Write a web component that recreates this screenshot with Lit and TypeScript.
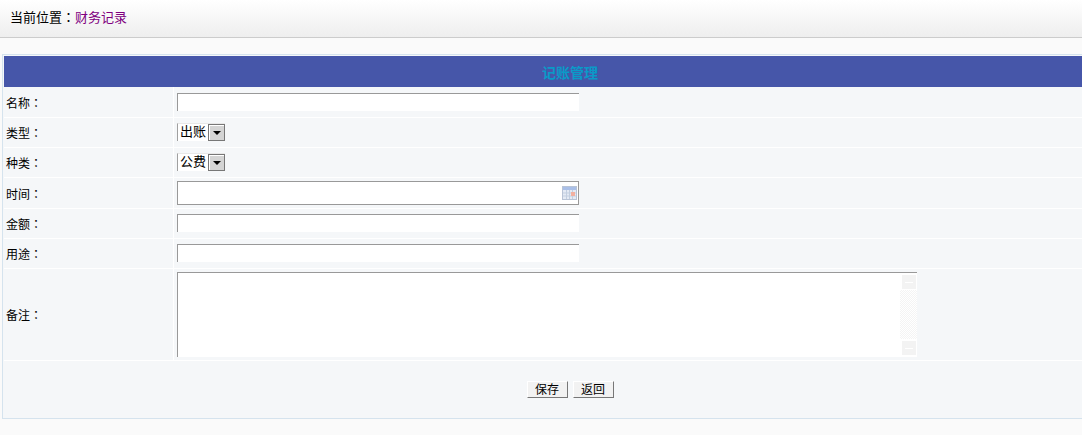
import { LitElement, html, css } from "lit";
import { customElement } from "lit/decorators.js";

@customElement("app-root")
export class AppRoot extends LitElement {
  static styles = css`
    :host { display: block; height: 435px; overflow: hidden; background: #fafafa; font-family: "Liberation Sans", "Noto Sans CJK SC", sans-serif; font-size: 12px; color: #000; }
    .c { font-family: "Noto Sans CJK TC", sans-serif; }
    .top { border-bottom: 1px solid #cccccc; background: linear-gradient(#ffffff, #eeeeee); display: flex; align-items: center; padding: 0 0 4px 10px; box-sizing: border-box; height: 38px; font-size: 13px; }
    .top a { color: #800080; text-decoration: none; }
    .panel { width: 1136px; margin: 16px 0 0 2px; border: 1px solid #d5e3ee; padding: 1px; background: #f5f7f9; box-sizing: border-box; }
    .title { height: 31px; background: #4656a9; color: #0a9ac8; font-weight: bold; font-size: 14px; display: flex; align-items: center; justify-content: center; }
    .row { display: grid; grid-template-columns: 169px 1fr; column-gap: 1px; border-bottom: 1px solid #ffffff; background: #ffffff; }
    .row > div { background: #f5f7f9; display: flex; align-items: center; }
    .label { padding-left: 2px; }
    .field { padding-left: 3px; }
    .h30 { height: 30px; } .h29 { height: 29px; } .h91 { height: 91px; }
    input { display: block; box-sizing: border-box; width: 402px; height: 18px; padding: 0; margin: 0; background: #fff; border: none; border-top: 1px solid #999; border-left: 1px solid #999; outline: none; }
    .up { margin-bottom: 1px; }
    .datewrap { position: relative; width: 402px; }
    input.date { height: 24px; border: 1px solid #999; }
    .cal { position: absolute; right: 2px; top: 5px; }
    .sel { display: flex; width: 48px; height: 18px; background: #fff; border-left: 1px solid #a0a0a0; border-top: 1px solid #e8e8e8; box-sizing: border-box; font-size: 13px; line-height: 16px; padding-left: 2px; justify-content: space-between; }
    .arrow { width: 17px; height: 17px; box-sizing: border-box; border: 1px solid #777; background: #d4d4d4; box-shadow: inset 1px 1px #fff; display: flex; align-items: center; justify-content: center; }
    .arrow i { display: block; width: 0; height: 0; border-left: 4px solid transparent; border-right: 4px solid transparent; border-top: 4px solid #000; }
    .area { position: relative; width: 740px; height: 85px; background: #fff; border-top: 1px solid #999; border-left: 1px solid #999; box-sizing: border-box; }
    .bar { position: absolute; right: 0; top: 0; bottom: 0; width: 17px; display: flex; flex-direction: column; align-items: center; padding-top: 2px; box-sizing: border-box; }
    .sb { width: 14px; height: 14px; background: #f3f3f3; display: flex; align-items: center; justify-content: center; }
    .sb b { display: block; width: 8px; height: 1px; background: #fff; }
    .track { width: 17px; height: 49px; margin: 1px 0 2px; background: repeating-conic-gradient(#f4f4f4 0 25%, #ffffff 0 50%) 0 0 / 2px 2px; }
    .actions { height: 56px; display: flex; justify-content: center; gap: 5px; padding-top: 20px; box-sizing: border-box; }
    button { width: 41px; height: 17px; padding: 1px 0 0; margin: 0; box-sizing: border-box; background: #f2f2f2; border: 1px solid; border-color: #fff #777 #777 #fff; font: 12px/14px "Liberation Sans", "Noto Sans CJK SC", sans-serif; color: #000; }
  `;

  private label(text: string, cls: string) {
    return html`<div class="label ${cls}">${text}<span class="c">：</span></div>`;
  }

  private textRow(label: string) {
    return html`<div class="row">${this.label(label, "h29")}<div class="field"><input class="up" type="text" /></div></div>`;
  }

  private selectRow(label: string, value: string) {
    return html`<div class="row">${this.label(label, "h29")}<div class="field">
      <div class="sel up"><span>${value}</span><span class="arrow"><i></i></span></div></div></div>`;
  }

  render() {
    return html`
      <div class="top"><span>当前位置<span class="c">：</span><a href="#">财务记录</a></span></div>
      <div class="panel">
        <div class="title">记账管理</div>
        <div class="row">${this.label("名称", "h30")}<div class="field"><input type="text" /></div></div>
        ${this.selectRow("类型", "出账")}
        ${this.selectRow("种类", "公费")}
        <div class="row">${this.label("时间", "h30")}<div class="field">
          <div class="datewrap"><input class="date" type="text" />
            <svg class="cal" width="15" height="14" viewBox="0 0 15 14">
              <rect x="0.5" y="0.5" width="14" height="13" fill="#e4eaf4" stroke="#b9c4d6"/>
              <rect x="1" y="1" width="13" height="3" fill="#a9bfe8"/>
              <path d="M4.5 4v9M7.5 4v9M10.5 4v9M1 7h13M1 10h13" stroke="#c3cfe0" fill="none"/>
              <rect x="9" y="6" width="4" height="4" fill="#f2b0a0"/>
            </svg>
          </div></div></div>
        ${this.textRow("金额")}
        ${this.textRow("用途")}
        <div class="row">${this.label("备注", "h91")}<div class="field">
          <div class="area"><div class="bar">
            <div class="sb"><b></b></div><div class="track"></div><div class="sb"><b></b></div>
          </div></div></div></div>
        <div class="actions"><button>保存</button><button>返回</button></div>
      </div>
    `;
  }
}
